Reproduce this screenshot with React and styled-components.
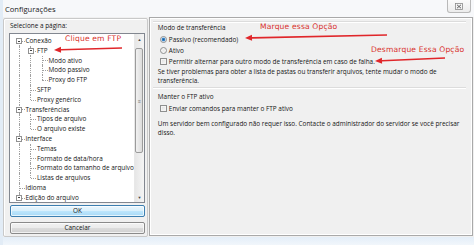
import React from 'react';
import styled, { createGlobalStyle } from 'styled-components';

const GlobalStyle = createGlobalStyle`
  html, body {
    margin: 0;
    padding: 0;
    background: #ffffff;
    overflow: hidden;
  }
  * { box-sizing: border-box; }
`;

const Window = styled.div`
  position: relative;
  width: 474px;
  height: 245px;
  background: linear-gradient(#f7f8fa 0, #f7f8fa 17px, #f0f0f0 17px, #f0f0f0 237px, #e4eef8 237px, #f1f6fb 245px);
  font-family: "Open Sans", "Noto Sans", sans-serif;
  font-size: 6.4px;
  color: #151515;
  overflow: hidden;
  border-left: 3px solid #e2ecf6;
`;

const TitleBar = styled.div`
  height: 17px;
  display: flex;
  justify-content: space-between;
  align-items: flex-start;
  padding: 0 3px 0 2px;
`;

const Title = styled.div`
  font-size: 7.6px;
  line-height: 19px;
  color: #222;
`;

const CloseButton = styled.div`
  width: 24px;
  height: 13px;
  border: 1px solid #b9b9b9;
  border-top: none;
  border-radius: 0 0 3px 3px;
  background: linear-gradient(#fbfbfb, #ececec);
  display: flex;
  align-items: center;
  justify-content: center;
`;

const Main = styled.div`
  height: 220px;
  display: flex;
  gap: 1px;
  padding: 0 2px 0 0;
`;

const LeftGroup = styled.div`
  width: 148px;
  height: 219px;
  margin-top: 1px;
  border: 1px solid #c9c9c9;
  box-shadow: inset 1px 1px 0 #fff;
  border-radius: 2px;
  padding: 2px 1px 0 5px;
  display: flex;
  flex-direction: column;
`;

const GroupLabel = styled.div`
  line-height: 10px;
  height: 12px;
  padding-left: 1px;
`;

const TreeBox = styled.div`
  height: 170px;
  margin-right: 1px;
  border: 1px solid #828790;
  background: #fff;
  display: flex;
`;

const TreeList = styled.div`
  flex: 1;
  padding: 2px 0 0 3px;
  overflow: hidden;
`;

const Row = styled.div`
  height: 9.8px;
  display: flex;
  align-items: stretch;
  white-space: nowrap;
`;

const Cell = styled.span`
  position: relative;
  width: 11.5px;
  flex: none;

  &::before {
    content: "";
    position: absolute;
    left: 5.5px;
    border-left: 1px dotted #a0a0a0;
    top: ${({ $kind }) => ($kind === 'first' ? '50%' : '0')};
    bottom: ${({ $kind }) => ($kind === 'elbow' ? '50%' : '0')};
    display: ${({ $kind }) => ($kind === 'blank' ? 'none' : 'block')};
  }

  &::after {
    content: "";
    position: absolute;
    left: 6px;
    right: 0;
    top: 50%;
    border-top: 1px dotted #a0a0a0;
    display: ${({ $kind }) => ($kind === 'pipe' || $kind === 'blank' ? 'none' : 'block')};
  }
`;

const Expander = styled.span`
  position: absolute;
  z-index: 1;
  left: 3px;
  top: 2px;
  width: 6px;
  height: 6px;
  border: 1px solid #919191;
  background: #fff;

  &::before {
    content: "";
    position: absolute;
    left: 1px;
    right: 1px;
    top: 1.5px;
    border-top: 1px solid #444;
  }
`;

const RowLabel = styled.span`
  line-height: 9.8px;
  padding-left: 1px;
`;

const ScrollBar = styled.div`
  width: 10px;
  background: linear-gradient(90deg, #e6e6e6, #f5f5f5);
  border-left: 1px solid #e8e8e8;
  display: flex;
  flex-direction: column;
  align-items: center;
`;

const ScrollArrow = styled.div`
  width: 100%;
  height: 10px;
  display: flex;
  align-items: center;
  justify-content: center;
  font-size: 4px;
  color: #444;
`;

const Thumb = styled.div`
  margin-top: 4px;
  width: 8px;
  height: 105px;
  border: 1px solid #9b9b9b;
  border-radius: 2px;
  background: linear-gradient(90deg, #f1f1f1, #dcdcdc);
  display: flex;
  align-items: center;
  justify-content: center;
  font-size: 5px;
  color: #777;
`;

const Spacer = styled.div`
  flex: 1;
`;

const Buttons = styled.div`
  display: flex;
  flex-direction: column;
  gap: 5px;
  padding: 2px 1px 0 1px;
`;

const Button = styled.div`
  height: 12px;
  border-radius: 2px;
  border: 1px solid ${({ $primary }) => ($primary ? '#3c7fb1' : '#8a8a8a')};
  background: ${({ $primary }) =>
    $primary
      ? 'linear-gradient(#eaf6fd 0%, #d9f0fc 50%, #bee6fd 50%, #a7d9f5 100%)'
      : 'linear-gradient(#f2f2f2 0%, #ebebeb 50%, #dddddd 50%, #cfcfcf 100%)'};
  box-shadow: inset 0 0 0 1px rgba(255, 255, 255, 0.7);
  display: flex;
  align-items: center;
  justify-content: center;
  line-height: 10px;
`;

const RightPanel = styled.div`
  flex: 1;
  height: 219px;
  border: 1px solid #a9a9a9;
  box-shadow: inset 1px 1px 0 #fff, inset -1px -1px 0 #fff;
  padding: 3px 6px 0 3px;
  display: flex;
  flex-direction: column;
`;

const Section = styled.div`
  border-top: 1px solid #dcdcdc;
  box-shadow: inset 0 1px 0 #fff;
  padding: 1px 0 0 5px;
  height: ${({ $h }) => $h}px;
`;

const SectionTitle = styled.div`
  line-height: 9px;
  height: ${({ $top }) => 11 + ($top || 0)}px;
  padding-top: ${({ $top }) => $top || 0}px;
`;

const Option = styled.div`
  display: flex;
  align-items: center;
  gap: 2px;
  height: 11px;
  padding-left: 2px;
`;

const Radio = styled.span`
  width: 7px;
  height: 7px;
  border-radius: 50%;
  border: 1px solid #8e8f8f;
  background: ${({ $on }) =>
    $on
      ? 'radial-gradient(circle, #1c5c93 0, #3a8ad0 1.4px, #dfe9f4 2.2px, #f4f4f4 3px)'
      : 'radial-gradient(circle, #e8e8e8, #fbfbfb)'};
`;

const Check = styled.span`
  width: 7px;
  height: 7px;
  border: 1px solid #8e8f8f;
  background: linear-gradient(135deg, #dcdcdc, #fbfbfb);
  box-shadow: inset 0 0 0 1px #f4f4f4;
`;

const Para = styled.div`
  line-height: 8.6px;
  padding-top: 1px;
  width: 308px;
`;

const Note = styled.div`
  line-height: 8.6px;
  padding: 3px 0 0 5px;
  width: 312px;
`;

const Annotation = styled.span`
  position: absolute;
  left: ${({ $x }) => $x}px;
  top: ${({ $y }) => $y}px;
  font-family: "DejaVu Sans", Verdana, sans-serif;
  font-size: 7.6px;
  letter-spacing: 0.15px;
  color: #d9302c;
  white-space: nowrap;
`;

const Overlay = styled.svg`
  position: absolute;
  left: -3px;
  top: 0;
  pointer-events: none;
`;

const tree = [
  { label: 'Conexão', guides: [], conn: 'first', exp: true },
  { label: 'FTP', guides: ['pipe'], conn: 'tee', exp: true },
  { label: 'Modo ativo', guides: ['pipe', 'pipe'], conn: 'tee' },
  { label: 'Modo passivo', guides: ['pipe', 'pipe'], conn: 'tee' },
  { label: 'Proxy do FTP', guides: ['pipe', 'pipe'], conn: 'elbow' },
  { label: 'SFTP', guides: ['pipe'], conn: 'tee' },
  { label: 'Proxy genérico', guides: ['pipe'], conn: 'elbow' },
  { label: 'Transferências', guides: [], conn: 'tee', exp: true },
  { label: 'Tipos de arquivo', guides: ['pipe'], conn: 'tee' },
  { label: 'O arquivo existe', guides: ['pipe'], conn: 'elbow' },
  { label: 'Interface', guides: [], conn: 'tee', exp: true },
  { label: 'Temas', guides: ['pipe'], conn: 'tee' },
  { label: 'Formato de data/hora', guides: ['pipe'], conn: 'tee' },
  { label: 'Formato do tamanho de arquivo', guides: ['pipe'], conn: 'tee' },
  { label: 'Listas de arquivos', guides: ['pipe'], conn: 'elbow' },
  { label: 'Idioma', guides: [], conn: 'tee' },
  { label: 'Edição do arquivo', guides: [], conn: 'tee', exp: true },
];

const Arrow = ({ x1, y1, x2, y2 }) => {
  const a = Math.atan2(y2 - y1, x2 - x1);
  const len = 7;
  const w = 3;
  const bx = x2 - len * Math.cos(a);
  const by = y2 - len * Math.sin(a);
  const px = -Math.sin(a) * w;
  const py = Math.cos(a) * w;
  return (
    <g>
      <line x1={x1} y1={y1} x2={bx} y2={by} stroke="#e0262a" strokeWidth="1.6" />
      <polygon
        points={`${x2},${y2} ${bx + px},${by + py} ${bx - px},${by - py}`}
        fill="#e0262a"
      />
    </g>
  );
};

const App = () => {
  return (
    <>
      <GlobalStyle />
      <Window>
        <TitleBar>
          <Title>Configurações</Title>
          <CloseButton>
            <svg width="8" height="7" viewBox="0 0 8 7">
              <rect x="0.5" y="0.5" width="7" height="6" fill="none" stroke="#8a8a8a" strokeWidth="0.8" />
              <path d="M2 1.8 L6 5.2 M6 1.8 L2 5.2" stroke="#555" strokeWidth="0.9" />
            </svg>
          </CloseButton>
        </TitleBar>
        <Main>
          <LeftGroup>
            <GroupLabel>Selecione a página:</GroupLabel>
            <TreeBox>
              <TreeList>
                {tree.map((item) => (
                  <Row key={item.label}>
                    {item.guides.map((g, i) => (
                      <Cell key={i} $kind={g} />
                    ))}
                    <Cell $kind={item.conn}>{item.exp && <Expander />}</Cell>
                    <RowLabel>{item.label}</RowLabel>
                  </Row>
                ))}
              </TreeList>
              <ScrollBar>
                <ScrollArrow>▲</ScrollArrow>
                <Thumb>≡</Thumb>
                <Spacer />
                <ScrollArrow>▼</ScrollArrow>
              </ScrollBar>
            </TreeBox>
            <Buttons>
              <Button $primary>OK</Button>
              <Button>Cancelar</Button>
            </Buttons>
          </LeftGroup>
          <RightPanel>
            <Section $h={66}>
              <SectionTitle>Modo de transferência</SectionTitle>
              <Option>
                <Radio $on />
                Passivo (recomendado)
              </Option>
              <Option>
                <Radio />
                Ativo
              </Option>
              <Option>
                <Check />
                Permitir alternar para outro modo de transferência em caso de falha.
              </Option>
              <Para>
                Se tiver problemas para obter a lista de pastas ou transferir arquivos, tente mudar o modo de
                transferência.
              </Para>
            </Section>
            <Section $h={30}>
              <SectionTitle $top={3}>Manter o FTP ativo</SectionTitle>
              <Option>
                <Check />
                Enviar comandos para manter o FTP ativo
              </Option>
            </Section>
            <Note>
              Um servidor bem configurado não requer isso. Contacte o administrador do servidor se você precisar
              disso.
            </Note>
          </RightPanel>
        </Main>

        <Annotation $x={62} $y={34}>Clique em FTP</Annotation>
        <Annotation $x={257} $y={22}>Marque essa Opção</Annotation>
        <Annotation $x={368} $y={45}>Desmarque Essa Opção</Annotation>
        <Overlay width="474" height="245" viewBox="0 0 474 245">
          <Arrow x1={122} y1={48} x2={54} y2={50} />
          <Arrow x1={387} y1={35} x2={245} y2={38} />
          <Arrow x1={445} y1={58} x2={375} y2={61} />
        </Overlay>
      </Window>
    </>
  );
};

export default App;
